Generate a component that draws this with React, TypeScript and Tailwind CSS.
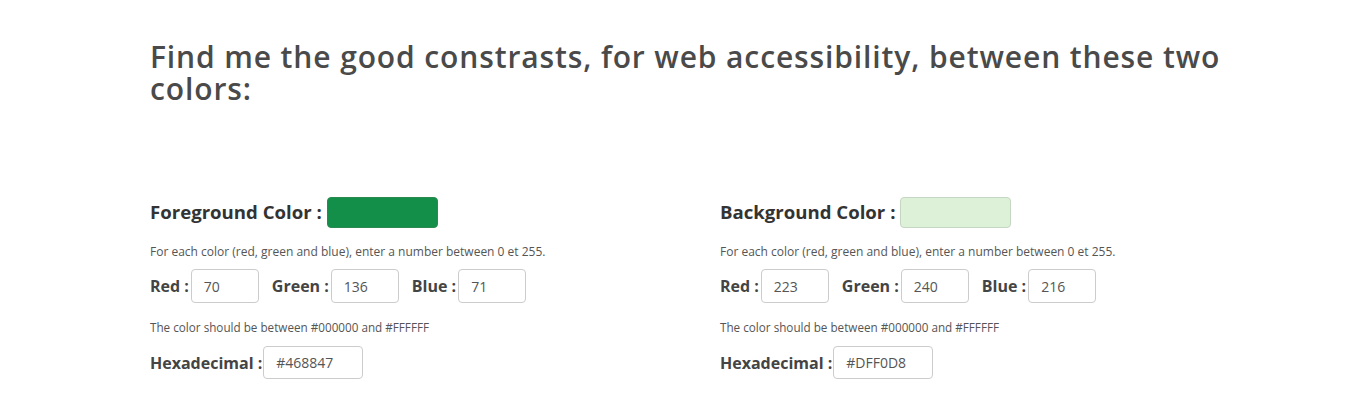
import React, { useState } from 'react';

type Rgb = { r: string; g: string; b: string; hex: string };

const ColorBlock: React.FC<{ title: string; swatch: string; swatchBorder: string; init: Rgb }> = ({ title, swatch, swatchBorder, init }) => {
    const [vals, setVals] = useState<Rgb>(init);
    const set = (k: keyof Rgb, v: string) => setVals(prev => ({ ...prev, [k]: v }));

    return (
        <div>
            <div className="flex items-center">
                <h3 className="text-[18.6px] font-bold text-[#333] leading-none">{title}</h3>
                <div className={`ml-[5px] w-[111px] h-[31px] rounded-[4px] border ${swatchBorder}`} style={{ backgroundColor: swatch }} />
            </div>
            <p className="mt-[15px] text-[12px] text-[#555] leading-[17px]">For each color (red, green and blue), enter a number between 0 et 255.</p>
            <div className="mt-[9px] flex items-center">
                {[
                    { id: 'r', label: 'Red :' },
                    { id: 'g', label: 'Green :' },
                    { id: 'b', label: 'Blue :' },
                ].map((f) => (
                    <div key={f.id} className="flex items-center mr-[13px]">
                        <label className="text-[16px] font-bold text-[#444] mr-[2px]">{f.label}</label>
                        <input
                            type="text"
                            className="w-[68px] h-[34px] px-[12px] rounded-[4px] border border-[#ccc] text-[14px] text-[#555] bg-white outline-none"
                            value={vals[f.id as keyof Rgb]}
                            onChange={(e) => set(f.id as keyof Rgb, e.target.value)}
                        />
                    </div>
                ))}
            </div>
            <p className="mt-[16px] text-[11.7px] text-[#555] leading-[16px]">The color should be between #000000 and #FFFFFF</p>
            <div className="mt-[11px] flex items-center">
                <label className="text-[16px] font-bold text-[#444] mr-[1px]">Hexadecimal :</label>
                <input
                    type="text"
                    className="w-[100px] h-[33px] px-[12px] rounded-[4px] border border-[#ccc] text-[14px] text-[#555] bg-white outline-none"
                    value={vals.hex}
                    onChange={(e) => set('hex', e.target.value)}
                />
            </div>
        </div>
    );
};

export default function App() {
    return (
        <div className="bg-white min-h-[408px] pl-[150px]" style={{ fontFamily: '"Open Sans", "Liberation Sans", sans-serif' }}>
            <div className="w-[1140px] pt-[41px]">
                <h1 className="text-[30px] font-semibold tracking-[0.88px] text-[#4a4a4a] leading-[32px]">
                    Find me the good constrasts, for web accessibility, between these two colors:
                </h1>
                <div className="mt-[92px] grid grid-cols-2">
                    <ColorBlock title="Foreground Color :" swatch="#148f4a" swatchBorder="border-[#2a8a50]" init={{ r: '70', g: '136', b: '71', hex: '#468847' }} />
                    <ColorBlock title="Background Color :" swatch="#dcf1d8" swatchBorder="border-[#c6d6c4]" init={{ r: '223', g: '240', b: '216', hex: '#DFF0D8' }} />
                </div>
            </div>
        </div>
    );
}
